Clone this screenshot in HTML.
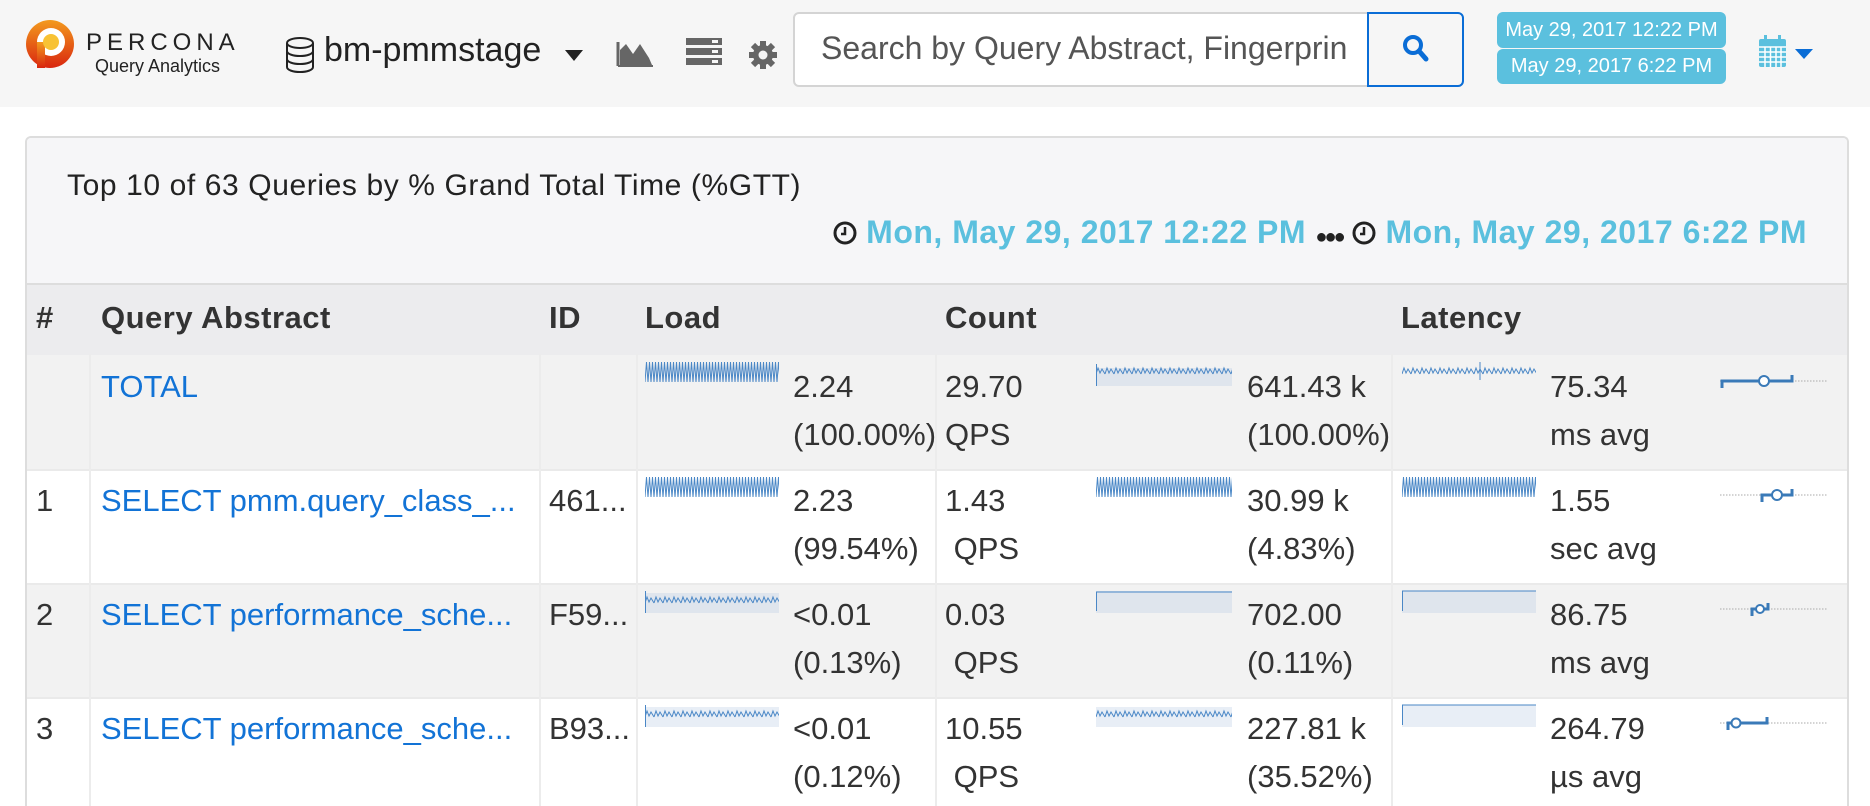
<!DOCTYPE html>
<html style="overflow:hidden;width:1870px;height:806px"><head><meta charset="utf-8"><style>
*{margin:0;padding:0;box-sizing:border-box}
body{width:1870px;height:806px;overflow:hidden;background:#fff;font-family:"Liberation Sans",sans-serif;color:#333;position:relative}
.a{position:absolute;white-space:nowrap}
.hdr{position:absolute;left:0;top:0;width:1870px;height:107px;background:#f6f6f6}
.lnk{color:#1273d6}
.t{font-size:31px;line-height:48px}
.th{font-size:31px;font-weight:bold;color:#333;letter-spacing:0.5px}
.vl{position:absolute;width:2px;background:#ececec}
</style></head><body>
<div class="hdr"></div>
<svg class="a" style="left:24px;top:20px" width="52" height="50" viewBox="0 0 52 50">
<defs><linearGradient id="lg" x1="0" y1="0" x2="0" y2="1"><stop offset="0" stop-color="#f39a1e"/><stop offset="1" stop-color="#d9260f"/></linearGradient></defs>
<circle cx="26" cy="24" r="24" fill="url(#lg)"/>
<circle cx="27" cy="22" r="14" fill="#fff"/>
<rect x="13" y="22" width="8" height="26" fill="url(#lg)"/>
<circle cx="27" cy="22" r="8" fill="#f8c234"/>
</svg>
<div class="a" style="left:86px;top:29px;font-size:24px;letter-spacing:5px;color:#222">PERCONA</div>
<div class="a" style="left:95px;top:56px;font-size:18px;color:#222">Query Analytics</div>
<svg class="a" style="left:285px;top:37px" width="30" height="36" viewBox="0 0 30 36" fill="none" stroke="#222" stroke-width="2">
<ellipse cx="15" cy="6" rx="13" ry="5"/><path d="M2 6v24c0 3 6 5 13 5s13-2 13-5V6"/><path d="M2 14c0 3 6 5 13 5s13-2 13-5M2 22c0 3 6 5 13 5s13-2 13-5"/>
</svg>
<div class="a" style="left:324px;top:31px;font-size:34px;color:#222">bm-pmmstage</div>
<svg class="a" style="left:565px;top:50px" width="18" height="12"><path d="M0 0h18L9 11z" fill="#222"/></svg>
<svg class="a" style="left:616px;top:38px" width="38" height="30"><path d="M2 28V4" stroke="#666" stroke-width="3"/><path d="M4 27L4 12 10 6 17 16 24 6 33 20 36 27z" fill="#666"/><path d="M2 28H37" stroke="#666" stroke-width="2"/></svg>
<svg class="a" style="left:686px;top:38px" width="36" height="28" fill="#666"><rect x="0" y="0" width="36" height="7"/><rect x="0" y="10" width="36" height="7"/><rect x="0" y="20" width="36" height="7"/><g fill="#f6f6f6"><rect x="26" y="2" width="6" height="3"/><rect x="26" y="12" width="6" height="3"/><rect x="26" y="22" width="6" height="3"/></g></svg>
<svg class="a" style="left:748px;top:40px" width="30" height="30" viewBox="0 0 30 30"><g fill="#666"><circle cx="15" cy="15" r="10"/><g stroke="#666" stroke-width="6"><path d="M15 1v28M1 15h28M5 5l20 20M25 5L5 25"/></g></g><circle cx="15" cy="15" r="4.5" fill="#f6f6f6"/></svg>
<div class="a" style="left:793px;top:12px;width:576px;height:75px;background:#fff;border:2px solid #d4d4d4;border-radius:6px 0 0 6px;overflow:hidden">
<div class="a" style="left:26px;top:16px;font-size:32px;color:#555">Search by Query Abstract, Fingerprin</div></div>
<div class="a" style="left:1367px;top:12px;width:97px;height:75px;background:#f6f6f6;border:2px solid #0a6dd6;border-radius:0 6px 6px 0"></div>
<svg class="a" style="left:1402px;top:34px" width="28" height="30"><circle cx="11" cy="11" r="8" fill="none" stroke="#0a6dd6" stroke-width="4"/><path d="M17 17l7 8" stroke="#0a6dd6" stroke-width="5" stroke-linecap="round"/></svg>
<div class="a" style="left:1497px;top:12px;width:229px;height:36px;background:#5bc0de;border-radius:6px;color:#fff;font-size:20px;text-align:center;line-height:36px">May 29, 2017 12:22 PM</div>
<div class="a" style="left:1497px;top:49px;width:229px;height:35px;background:#5bc0de;border-radius:6px;color:#fff;font-size:20px;text-align:center;line-height:35px">May 29, 2017 6:22 PM</div>
<svg class="a" style="left:1758px;top:35px" width="60" height="34"><rect x="1" y="4" width="27" height="28" rx="2" fill="#5bc0de"/><g stroke="#fff" stroke-width="1.5"><path d="M1 12h27M1 17h27M1 22h27M1 27h27M7 12v20M12.5 12v20M18 12v20M23 12v20"/></g><rect x="6" y="0" width="3" height="7" fill="#5bc0de"/><rect x="20" y="0" width="3" height="7" fill="#5bc0de"/><path d="M37 14h18l-9 10z" fill="#0a6dd6"/></svg>

<div class="a" style="left:25px;top:136px;width:1824px;height:670px;border:2px solid #ddd;border-bottom:none;border-radius:6px 6px 0 0;background:#fff;overflow:hidden">
<div class="a" style="left:0;top:0;width:1822px;height:147px;background:#f6f6f8;border-bottom:2px solid #ddd"></div>
<div class="a" style="left:0;top:147px;width:1822px;height:70px;background:#ececee"></div>
<div class="a" style="left:0;top:217px;width:1822px;height:114px;background:#f2f2f2"></div>
<div class="a" style="left:0;top:331px;width:1822px;height:114px;background:#fff;border-top:2px solid #eaeaea"></div>
<div class="a" style="left:0;top:445px;width:1822px;height:114px;background:#f2f2f2;border-top:2px solid #eaeaea"></div>
<div class="a" style="left:0;top:559px;width:1822px;height:111px;background:#fff;border-top:2px solid #eaeaea"></div>
</div>
<div class="vl" style="left:89px;top:354px;height:452px"></div>
<div class="vl" style="left:539px;top:354px;height:452px"></div>
<div class="vl" style="left:636px;top:354px;height:452px"></div>
<div class="vl" style="left:935px;top:354px;height:452px"></div>
<div class="vl" style="left:1391px;top:354px;height:452px"></div>

<div class="a" style="left:67px;top:169px;font-size:30px;color:#222;letter-spacing:0.6px">Top 10 of 63 Queries by % Grand Total Time (%GTT)</div>
<div class="a" style="right:63px;top:214px;font-size:32px;font-weight:bold;color:#5bc0de;letter-spacing:0.5px">
<svg width="24" height="24" viewBox="0 0 24 24" style="vertical-align:-2px"><circle cx="12" cy="12" r="10" fill="none" stroke="#222" stroke-width="3"/><path d="M12 6v7H8" stroke="#222" stroke-width="2.5" fill="none"/></svg> Mon, May 29, 2017 12:22 PM <span style="color:#222;font-size:20px;letter-spacing:-3px">&#9679;&#9679;&#9679;</span> <svg width="24" height="24" viewBox="0 0 24 24" style="vertical-align:-2px"><circle cx="12" cy="12" r="10" fill="none" stroke="#222" stroke-width="3"/><path d="M12 6v7H8" stroke="#222" stroke-width="2.5" fill="none"/></svg> Mon, May 29, 2017 6:22 PM</div>

<div class="a th" style="left:36px;top:300px">#</div>
<div class="a th" style="left:101px;top:300px">Query Abstract</div>
<div class="a th" style="left:549px;top:300px">ID</div>
<div class="a th" style="left:645px;top:300px">Load</div>
<div class="a th" style="left:945px;top:300px">Count</div>
<div class="a th" style="left:1401px;top:300px">Latency</div>

<svg width="0" height="0" style="position:absolute"><defs>
<pattern id="zz" width="6" height="24" patternUnits="userSpaceOnUse"><path d="M0 22L1.5 2 3 22 4.5 2 6 22" fill="none" stroke="#4a87c6" stroke-width="1"/></pattern>
<pattern id="zs" width="9" height="24" patternUnits="userSpaceOnUse"><path d="M0 14L2 8 4 13 6 9 9 14" fill="none" stroke="#4a87c6" stroke-width="1"/></pattern>
</defs></svg>

<div class="a t lnk" style="left:101px;top:363px">TOTAL</div>
<svg class="a" style="left:645px;top:360px" width="134" height="26"><rect width="134" height="24" fill="url(#zz)"/></svg>
<div class="a t" style="left:793px;top:363px">2.24<br>(100.00%)</div>
<div class="a t" style="left:945px;top:363px">29.70<br>QPS</div>
<svg class="a" style="left:1096px;top:360px" width="136" height="26"><rect y="8" width="136" height="18" fill="#dfe5ed"/><rect y="0" width="136" height="20" fill="url(#zs)"/><path d="M0.5 4V26" stroke="#4a87c6"/></svg>
<div class="a t" style="left:1247px;top:363px">641.43 k<br>(100.00%)</div>
<svg class="a" style="left:1402px;top:360px" width="134" height="24"><rect width="134" height="24" fill="url(#zs)"/><path d="M78 20V2" stroke="#4a87c6"/></svg>
<div class="a t" style="left:1550px;top:363px">75.34<br>ms avg</div>
<svg class="a" style="left:1720px;top:372px" width="110" height="20"><path d="M0 9H108" stroke="#aaa" stroke-dasharray="1.5 1.5"/><path d="M2 16V9H72V3" stroke="#3a7ab8" stroke-width="3" fill="none"/><circle cx="44" cy="9" r="5" fill="#fff" stroke="#3a7ab8" stroke-width="2"/></svg>

<div class="a t" style="left:36px;top:477px">1</div>
<div class="a t lnk" style="left:101px;top:477px">SELECT pmm.query_class_...</div>
<div class="a t" style="left:549px;top:477px">461...</div>
<svg class="a" style="left:645px;top:475px" width="134" height="26"><rect width="134" height="24" fill="url(#zz)"/></svg>
<div class="a t" style="left:793px;top:477px">2.23<br>(99.54%)</div>
<div class="a t" style="left:945px;top:477px">1.43<br>&nbsp;QPS</div>
<svg class="a" style="left:1096px;top:475px" width="136" height="26"><rect width="136" height="24" fill="url(#zz)"/></svg>
<div class="a t" style="left:1247px;top:477px">30.99 k<br>(4.83%)</div>
<svg class="a" style="left:1402px;top:475px" width="134" height="26"><rect width="134" height="24" fill="url(#zz)"/></svg>
<div class="a t" style="left:1550px;top:477px">1.55<br>sec avg</div>
<svg class="a" style="left:1720px;top:486px" width="110" height="20"><path d="M0 9H108" stroke="#aaa" stroke-dasharray="1.5 1.5"/><path d="M42 16V9H72V3" stroke="#3a7ab8" stroke-width="3" fill="none"/><circle cx="57" cy="9" r="5" fill="#fff" stroke="#3a7ab8" stroke-width="2"/></svg>

<div class="a t" style="left:36px;top:591px">2</div>
<div class="a t lnk" style="left:101px;top:591px">SELECT performance_sche...</div>
<div class="a t" style="left:549px;top:591px">F59...</div>
<svg class="a" style="left:645px;top:589px" width="134" height="24"><rect y="4" width="134" height="20" fill="#dfe5ed"/><rect width="134" height="20" fill="url(#zs)"/><path d="M0.5 2V24" stroke="#4a87c6"/></svg>
<div class="a t" style="left:793px;top:591px">&lt;0.01<br>(0.13%)</div>
<div class="a t" style="left:945px;top:591px">0.03<br>&nbsp;QPS</div>
<svg class="a" style="left:1096px;top:589px" width="136" height="24"><rect y="2" width="136" height="22" fill="#dfe5ed"/><path d="M0.5 22V3H136" stroke="#4a87c6" fill="none"/></svg>
<div class="a t" style="left:1247px;top:591px">702.00<br>(0.11%)</div>
<svg class="a" style="left:1402px;top:589px" width="134" height="24"><rect y="2" width="134" height="22" fill="#dfe5ed"/><path d="M0.5 22V2H134" stroke="#4a87c6" fill="none"/></svg>
<div class="a t" style="left:1550px;top:591px">86.75<br>ms avg</div>
<svg class="a" style="left:1720px;top:600px" width="110" height="20"><path d="M0 9H108" stroke="#aaa" stroke-dasharray="1.5 1.5"/><path d="M32 16V9H48V3" stroke="#3a7ab8" stroke-width="3" fill="none"/><circle cx="40" cy="9" r="4" fill="#fff" stroke="#3a7ab8" stroke-width="2"/></svg>

<div class="a t" style="left:36px;top:705px">3</div>
<div class="a t lnk" style="left:101px;top:705px">SELECT performance_sche...</div>
<div class="a t" style="left:549px;top:705px">B93...</div>
<svg class="a" style="left:645px;top:703px" width="134" height="24"><rect y="4" width="134" height="20" fill="#e8eef6"/><rect width="134" height="20" fill="url(#zs)"/><path d="M0.5 2V24" stroke="#4a87c6"/></svg>
<div class="a t" style="left:793px;top:705px">&lt;0.01<br>(0.12%)</div>
<div class="a t" style="left:945px;top:705px">10.55<br>&nbsp;QPS</div>
<svg class="a" style="left:1096px;top:703px" width="136" height="24"><rect y="4" width="136" height="20" fill="#e8eef6"/><rect width="136" height="20" fill="url(#zs)"/></svg>
<div class="a t" style="left:1247px;top:705px">227.81 k<br>(35.52%)</div>
<svg class="a" style="left:1402px;top:703px" width="134" height="24"><rect y="2" width="134" height="22" fill="#e8eef6"/><path d="M0.5 22V2H134" stroke="#4a87c6" fill="none"/></svg>
<div class="a t" style="left:1550px;top:705px">264.79<br>µs avg</div>
<svg class="a" style="left:1720px;top:714px" width="110" height="20"><path d="M0 9H108" stroke="#aaa" stroke-dasharray="1.5 1.5"/><path d="M8 16V9H47V3" stroke="#3a7ab8" stroke-width="3" fill="none"/><circle cx="16" cy="9" r="4.5" fill="#fff" stroke="#3a7ab8" stroke-width="2"/></svg>
</body></html>
